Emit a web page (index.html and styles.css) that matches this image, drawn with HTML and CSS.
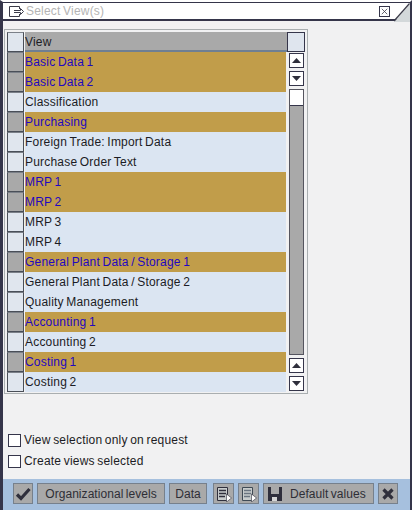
FILE: index.html
```html
<!DOCTYPE html>
<html>
    <head>
        <meta charset="utf-8">
        <title>Select View(s)</title>
        <link rel="stylesheet" href="styles.css">
    </head>
    <body>
        <div class="window">
            <div class="titleBar">
                <svg class="titleIcon" width="15" height="11" viewBox="0 0 15 11">
                    <path d="M10.500 3V.5H.5v10h10V8M5 4.500h6.500V2.500L14.500 5.500 11.500 8.500V6.500H5" fill="none" stroke="#3a3a48" stroke-width="1"/>
                </svg>
                <span class="titleText">Select View(s)</span>
                <div class="closeBox">
                    <svg width="9" height="9" viewBox="0 0 9 9">
                        <path d="M1 1l7 7M8 1l-7 7" stroke="#3a3a48" stroke-width="1"/>
                    </svg>
                </div>
            </div>
            <svg class="corner" width="16" height="19" viewBox="0 0 16 19">
                <path d="M0 19L15.500 1.500H16V19Z" fill="#d3d8da"/>
                <path d="M0 18L15.500 .5" stroke="#3a3a48" stroke-width="1.200"/>
            </svg>

            <div class="content">
                <div class="tableBox">
                    <div class="headerRow">
                        <div class="selector"></div>
                        <div class="headerCell">View</div>
                        <div class="headerEnd"></div>
                    </div>
                    <div class="tableBody">
                        <div class="rows">
                            <div class="row on"><div class="selector"></div><div class="cell">Basic Data 1</div></div>
                            <div class="row on"><div class="selector"></div><div class="cell">Basic Data 2</div></div>
                            <div class="row"><div class="selector"></div><div class="cell">Classification</div></div>
                            <div class="row on"><div class="selector"></div><div class="cell">Purchasing</div></div>
                            <div class="row"><div class="selector"></div><div class="cell">Foreign Trade: Import Data</div></div>
                            <div class="row"><div class="selector"></div><div class="cell">Purchase Order Text</div></div>
                            <div class="row on"><div class="selector"></div><div class="cell">MRP 1</div></div>
                            <div class="row on"><div class="selector"></div><div class="cell">MRP 2</div></div>
                            <div class="row"><div class="selector"></div><div class="cell">MRP 3</div></div>
                            <div class="row"><div class="selector"></div><div class="cell">MRP 4</div></div>
                            <div class="row on"><div class="selector"></div><div class="cell">General Plant Data / Storage 1</div></div>
                            <div class="row"><div class="selector"></div><div class="cell">General Plant Data / Storage 2</div></div>
                            <div class="row"><div class="selector"></div><div class="cell">Quality Management</div></div>
                            <div class="row on"><div class="selector"></div><div class="cell">Accounting 1</div></div>
                            <div class="row"><div class="selector"></div><div class="cell">Accounting 2</div></div>
                            <div class="row on"><div class="selector"></div><div class="cell">Costing 1</div></div>
                            <div class="row"><div class="selector"></div><div class="cell">Costing 2</div></div>
                        </div>
                        <div class="scrollBar">
                            <div class="scrollBtn"><svg width="11" height="7" viewBox="0 0 11 7"><path d="M5.500 1L10 6H1Z" fill="#2f2f3c"/></svg></div>
                            <div class="scrollBtn"><svg width="11" height="7" viewBox="0 0 11 7"><path d="M1 1H10L5.500 6Z" fill="#2f2f3c"/></svg></div>
                            <div class="track">
                                <div class="thumb"></div>
                            </div>
                            <div class="scrollBtn"><svg width="11" height="7" viewBox="0 0 11 7"><path d="M5.500 1L10 6H1Z" fill="#2f2f3c"/></svg></div>
                            <div class="scrollBtn"><svg width="11" height="7" viewBox="0 0 11 7"><path d="M1 1H10L5.500 6Z" fill="#2f2f3c"/></svg></div>
                        </div>
                    </div>
                </div>

                <div class="options">
                    <label class="option"><span class="checkBox"></span>View selection only on request</label>
                    <label class="option"><span class="checkBox"></span>Create views selected</label>
                </div>
            </div>

            <div class="toolbar">
                <div class="btn iconBtn check">
                    <svg width="17" height="14" viewBox="0 0 17 14"><path d="M2 7.500l4 4L14.500 2" fill="none" stroke="#2f2f3c" stroke-width="3.200"/></svg>
                </div>
                <div class="btn orgBtn">Organizational levels</div>
                <div class="btn dataBtn">Data</div>
                <div class="btn iconBtn list">
                    <svg width="16" height="16" viewBox="0 0 16 16">
                        <path d="M1.500 1.500h10v13h-10z" fill="#c8cccc" stroke="#2f2f3c"/>
                        <path d="M3 4.500h7M3 7.500h7M3 10.500h6" stroke="#2f2f3c" stroke-width="1.400"/>
                        <path d="M10.500 8l5 4-5 4z" fill="#fff" stroke="#2f2f3c" stroke-width=".6"/>
                    </svg>
                </div>
                <div class="btn iconBtn list">
                    <svg width="16" height="16" viewBox="0 0 16 16">
                        <path d="M1.500 1.500h10v13h-10z" fill="#c8cccc" stroke="#3f4a55"/>
                        <path d="M3 4.500h7M3 7.500h7M3 10.500h6" stroke="#6a7480" stroke-width="1.400"/>
                        <path d="M10.500 8l5 4-5 4z" fill="#fff" stroke="#2f2f3c" stroke-width=".6"/>
                    </svg>
                </div>
                <div class="btn defaultBtn">
                    <svg width="16" height="16" viewBox="0 0 16 16">
                        <path d="M1 1h14v14H1z" fill="#2f2f3c"/>
                        <path d="M4 1h8v7H4z" fill="#a9a9a9"/>
                        <path d="M5 11h5v4H5z" fill="#d5d5d5"/>
                    </svg>
                    <span>Default values</span>
                </div>
                <div class="btn iconBtn cancel">
                    <svg width="14" height="14" viewBox="0 0 14 14"><path d="M2.500 2.500l9 9M11.500 2.500l-9 9" stroke="#2f2f3c" stroke-width="3.200"/></svg>
                </div>
            </div>
        </div>
    </body>
</html>
```

FILE: styles.css
```css
html, body {
    margin: 0;
    padding: 0;
}
body {
    width: 412px;
    height: 510px;
    overflow: hidden;
    background-color: #f1f1f2;
    font-family: "Liberation Sans", Arial, sans-serif;
    font-size: 12px;
    letter-spacing: 0.2px;
    word-spacing: -1px;
    color: #1c1c24;
}
.window {
    position: relative;
    box-sizing: border-box;
    width: 412px;
    height: 510px;
    border-top: 2px solid #fff;
    border-left: 3px solid #35354a;
    border-right: 2px solid #35354a;
    display: flex;
    flex-direction: column;
}

/* title bar */
.titleBar {
    box-sizing: border-box;
    height: 19px;
    background-color: #fff;
    border-top: 1px solid #35354a;
    border-bottom: 2px solid #35354a;
    display: flex;
    align-items: center;
    padding: 0 20px 0 6px;
}
.titleIcon {
    margin-right: 2px;
}
.titleText {
    flex: 1;
    color: #b4b4b4;
}
.closeBox {
    box-sizing: border-box;
    width: 11px;
    height: 11px;
    border: 1px solid #35354a;
    display: flex;
    align-items: center;
    justify-content: center;
}
.closeBox svg {
    width: 7px;
    height: 7px;
}
.corner {
    position: absolute;
    top: 1px;
    right: 0;
}

/* table */
.content {
    flex: 1;
    padding: 8px 0 0 1px;
}
.tableBox {
    box-sizing: border-box;
    width: 304px;
    height: 365px;
    border: 1px solid #a9aeb0;
    padding: 2px 2px 0 2px;
}
.headerRow {
    display: flex;
    height: 20px;
}
.selector {
    box-sizing: border-box;
    width: 17px;
    flex: none;
    background-color: #e0e6ee;
    border: 1px solid #4a4f58;
    border-top-color: #7b8088;
}
.headerCell {
    flex: 1;
    box-sizing: border-box;
    margin-left: 1px;
    line-height: 20px;
    background-color: #a9a9a9;
    border-bottom: 2px solid #6f7f93;
}
.headerEnd {
    box-sizing: border-box;
    width: 18px;
    background-color: #dfe5ee;
    border: 1px solid #35354a;
}
.tableBody {
    display: flex;
}
.rows {
    width: 279px;
}
.row {
    display: flex;
    height: 20px;
}
.cell {
    flex: 1;
    margin-left: 1px;
    line-height: 20px;
    background-color: #dbe5f2;
    white-space: nowrap;
}
.row.on .selector {
    background-color: #a9a9a9;
}
.row.on .cell {
    background-color: #c19d4a;
    color: #1f08c0;
}

/* scroll bar */
.scrollBar {
    margin-left: 3px;
    width: 15px;
    display: flex;
    flex-direction: column;
    padding-top: 1px;
    gap: 3px;
}
.scrollBtn {
    box-sizing: border-box;
    height: 15px;
    background-color: #fff;
    border: 1px solid #35354a;
    display: flex;
    align-items: center;
    justify-content: center;
}
.track {
    box-sizing: border-box;
    height: 266px;
    background-color: #a9a9a9;
    border: 1px solid #55555f;
}
.thumb {
    height: 15px;
    background-color: #fff;
    border-bottom: 1px solid #35354a;
}

/* options */
.options {
    margin-top: 39px;
    padding-left: 4px;
    display: flex;
    flex-direction: column;
    gap: 7px;
}
.option {
    display: flex;
    align-items: center;
    height: 14px;
}
.checkBox {
    box-sizing: border-box;
    width: 13px;
    height: 13px;
    margin-right: 3px;
    background-color: #fff;
    border: 1px solid #35354a;
}

/* toolbar */
.toolbar {
    box-sizing: border-box;
    height: 31px;
    background-color: #a6c0de;
    padding: 4px 0 6px 10px;
    display: flex;
    gap: 4px;
}
.btn {
    box-sizing: border-box;
    height: 21px;
    background-color: #a9a9a9;
    border: 1px solid #76808c;
    display: flex;
    align-items: center;
    justify-content: center;
    color: #2e2e36;
    letter-spacing: 0.05px;
    white-space: nowrap;
}
.iconBtn {
    width: 20px;
}
.orgBtn {
    width: 128px;
}
.dataBtn {
    width: 38px;
    margin-right: 2px;
}
.list {
    width: 21px;
}
.defaultBtn {
    width: 111px;
    gap: 7px;
    padding: 0 3px;
    justify-content: flex-start;
}
```
